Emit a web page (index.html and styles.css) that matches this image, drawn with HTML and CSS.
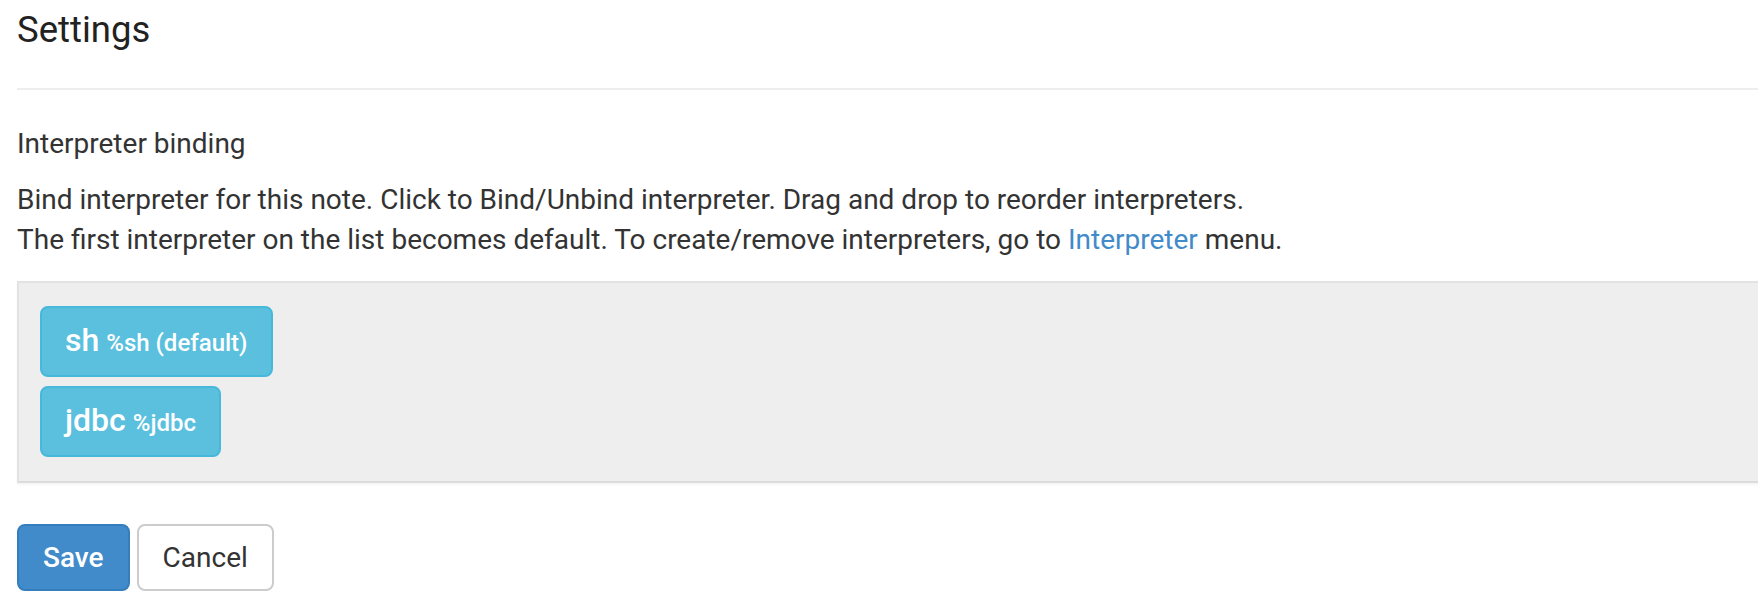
FILE: index.html
```html
<!DOCTYPE html>
<html lang="en">
<head>
<meta charset="utf-8">
<title>Settings</title>
<link rel="stylesheet" href="styles.css">
</head>
<body>
<div class="page">
  <h3 class="title">Settings</h3>
  <hr class="divider">
  <div class="section-label">Interpreter binding</div>
  <p class="desc">Bind interpreter for this note. Click to Bind/Unbind interpreter. Drag and drop to reorder interpreters.<br>The first interpreter on the list becomes default. To create/remove interpreters, go to <a class="link" href="#">Interpreter</a> menu.</p>
  <div class="well">
    <div class="bind-btn"><span class="bind-name">sh</span> <small class="bind-meta">%sh (default)</small></div>
    <div class="bind-btn"><span class="bind-name">jdbc</span> <small class="bind-meta">%jdbc</small></div>
  </div>
  <div class="actions">
    <button class="btn btn-primary">Save</button>
    <button class="btn btn-default">Cancel</button>
  </div>
</div>
</body>
</html>
```

FILE: styles.css
```css
html, body {
  margin: 0;
  padding: 0;
  background: #fff;
  overflow: hidden;
}

body {
  font-family: Roboto, "Liberation Sans", Arial, sans-serif;
  font-size: 28px;
  line-height: 40px;
  color: #333;
}

.page {
  padding-left: 17px;
  margin-right: -20px;
}

.title {
  margin: 10px 0 0;
  font-size: 36.5px;
  line-height: 40px;
  font-weight: 400;
  color: #222;
}

.divider {
  margin: 38px 0 0;
  border: 0;
  border-top: 2px solid #eeeeee;
  height: 0;
}

.section-label {
  margin-top: 34px;
}

.desc {
  margin: 16px 0 0;
}

.link {
  color: #428bca;
  text-decoration: none;
}

.well {
  margin-top: 21px;
  background: #eeeeee;
  border: 2px solid #e3e3e3;
  border-bottom-color: #dcdcdc;
  padding: 23px 23px 24px 21px;
  display: flex;
  flex-direction: column;
  align-items: flex-start;
  gap: 9px;
  box-shadow: 0 2px 2px rgba(0, 0, 0, 0.04);
}

.bind-btn {
  background: #5bc0de;
  border: 2px solid #46b8da;
  border-radius: 8px;
  color: #fff;
  font-size: 28px;
  line-height: 40px;
  padding: 14px 23px 13px;
  white-space: nowrap;
  cursor: move;
  font-weight: 500;
}

.bind-name {
  font-size: 32px;
  line-height: 1;
}

.bind-meta {
  font-size: 24px;
  line-height: 1;
}

.actions {
  margin-top: 41px;
  display: flex;
  gap: 7px;
}

.btn {
  font-family: inherit;
  font-size: 28px;
  line-height: 40px;
  padding: 12px 24px 11px;
  border-radius: 8px;
  border: 2px solid transparent;
  cursor: pointer;
}

.btn-primary {
  background: #428bca;
  border-color: #357ebd;
  color: #fff;
  font-weight: 500;
}

.btn-default {
  background: #fff;
  border-color: #cccccc;
  color: #333;
}
```
